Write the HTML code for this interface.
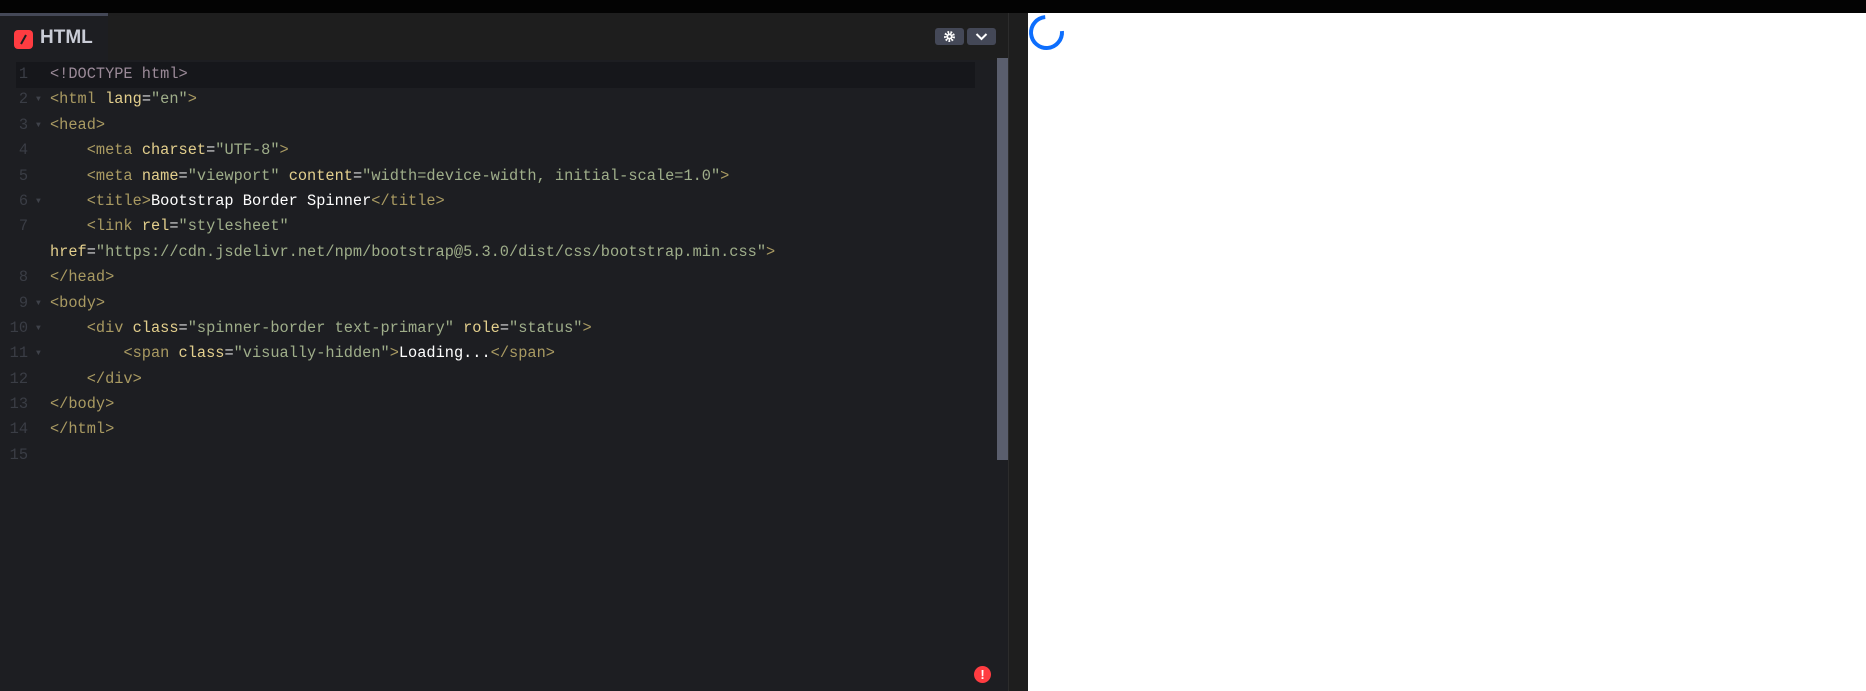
<!DOCTYPE html>
<html><head><style>
*{margin:0;padding:0;box-sizing:border-box}
body{width:1866px;height:691px;background:#000;position:relative;overflow:hidden;font-family:"Liberation Sans",sans-serif}
#top{position:absolute;left:0;top:0;width:1866px;height:13px;background:#030303}
#hdr{position:absolute;left:0;top:13px;width:1008px;height:47px;background:#1e1e1e}
#tab{position:absolute;left:0;top:13px;width:108px;height:47px;background:#1d1e22;border-top:3px solid #444857}
#tab .ic{position:absolute;left:14px;top:14px;width:19px;height:19px;background:#ff3c41;border-radius:4px}
#tab .t{position:absolute;left:40px;top:11px;font-weight:bold;font-size:19px;color:#c9ccd6}
.btn{position:absolute;top:28px;width:29px;height:17px;background:#444857;border-radius:3px}
#ed{position:absolute;left:0;top:60px;width:1008px;height:631px;background:#1d1e22}
#hl{position:absolute;left:16px;top:62px;width:959px;height:26px;background:#16171b}
#sb{position:absolute;left:997px;top:58px;width:11px;height:402px;background:#5a5e6d}
#div{position:absolute;left:1008px;top:13px;width:20px;height:678px;background:#1e1e1e;border-left:1px solid #2c2c2c}
#pv{position:absolute;left:1028px;top:13px;width:838px;height:678px;background:#fff}
#sp{position:absolute;left:1029px;top:15px;width:35px;height:35px;border:4.5px solid #0d6efd;border-right-color:transparent;border-radius:50%;transform:rotate(-50deg)}
.code{position:absolute;left:0;top:62px;font-family:"Liberation Mono",monospace;font-size:15.3px;color:#ddd}
.r{height:25.4px;line-height:25.4px;position:relative}
.n{position:absolute;left:0;width:30px;text-align:right;color:#3a3d45;padding-right:2px}
.f{position:absolute;left:36px;top:0;color:#3f424a;font-size:8px}
.c{position:absolute;left:50px;white-space:pre}
.g{color:#a99a62}.a{color:#e3cf8d}.s{color:#9fae8a}.d{color:#9b8a98}.w{color:#fff}
#err{position:absolute;left:974px;top:666px;width:17px;height:17px;border-radius:50%;background:#ff3c41;color:#fff;font-weight:bold;font-size:13px;text-align:center;line-height:17px}
</style></head><body>
<div id="top"></div>
<div id="hdr"></div>
<div id="tab"><div class="ic"><svg width="19" height="19"><line x1="7" y1="14" x2="12" y2="5" stroke="#1d1e22" stroke-width="2"/></svg></div><div class="t">HTML</div></div>
<div class="btn" style="left:935px"><svg width="29" height="17"><circle cx="14.5" cy="8.5" r="4" fill="none" stroke="#fff" stroke-width="3" stroke-dasharray="1.6 1.2"/><circle cx="14.5" cy="8.5" r="3" fill="#fff"/><circle cx="14.5" cy="8.5" r="1.3" fill="#444857"/></svg></div>
<div class="btn" style="left:967px"><svg width="29" height="17"><polyline points="9.5,6 14.5,11 19.5,6" fill="none" stroke="#fff" stroke-width="2"/></svg></div>
<div id="ed"></div>
<div id="hl"></div>
<div id="sb"></div>
<div id="div"></div>
<div id="pv"></div>
<div id="sp"></div>
<div class="code"><div class="r"><span class="n">1</span><span class="c d">&lt;!DOCTYPE html&gt;</span></div><div class="r"><span class="n">2</span><span class="f">▼</span><span class="c"><span class="g">&lt;html</span> <span class="a">lang</span>=<span class="s">"en"</span><span class="g">&gt;</span></span></div><div class="r"><span class="n">3</span><span class="f">▼</span><span class="c"><span class="g">&lt;head&gt;</span></span></div><div class="r"><span class="n">4</span><span class="c">    <span class="g">&lt;meta</span> <span class="a">charset</span>=<span class="s">"UTF-8"</span><span class="g">&gt;</span></span></div><div class="r"><span class="n">5</span><span class="c">    <span class="g">&lt;meta</span> <span class="a">name</span>=<span class="s">"viewport"</span> <span class="a">content</span>=<span class="s">"width=device-width, initial-scale=1.0"</span><span class="g">&gt;</span></span></div><div class="r"><span class="n">6</span><span class="f">▼</span><span class="c">    <span class="g">&lt;title&gt;</span><span class="w">Bootstrap Border Spinner</span><span class="g">&lt;/title&gt;</span></span></div><div class="r"><span class="n">7</span><span class="c">    <span class="g">&lt;link</span> <span class="a">rel</span>=<span class="s">"stylesheet"</span></span></div><div class="r"><span class="c"><span class="a">href</span>=<span class="s">"https://cdn.jsdelivr.net/npm/bootstrap@5.3.0/dist/css/bootstrap.min.css"</span><span class="g">&gt;</span></span></div><div class="r"><span class="n">8</span><span class="c"><span class="g">&lt;/head&gt;</span></span></div><div class="r"><span class="n">9</span><span class="f">▼</span><span class="c"><span class="g">&lt;body&gt;</span></span></div><div class="r"><span class="n">10</span><span class="f">▼</span><span class="c">    <span class="g">&lt;div</span> <span class="a">class</span>=<span class="s">"spinner-border text-primary"</span> <span class="a">role</span>=<span class="s">"status"</span><span class="g">&gt;</span></span></div><div class="r"><span class="n">11</span><span class="f">▼</span><span class="c">        <span class="g">&lt;span</span> <span class="a">class</span>=<span class="s">"visually-hidden"</span><span class="g">&gt;</span><span class="w">Loading...</span><span class="g">&lt;/span&gt;</span></span></div><div class="r"><span class="n">12</span><span class="c">    <span class="g">&lt;/div&gt;</span></span></div><div class="r"><span class="n">13</span><span class="c"><span class="g">&lt;/body&gt;</span></span></div><div class="r"><span class="n">14</span><span class="c"><span class="g">&lt;/html&gt;</span></span></div><div class="r"><span class="n">15</span></div></div>
<div id="err">!</div>
</body></html>
